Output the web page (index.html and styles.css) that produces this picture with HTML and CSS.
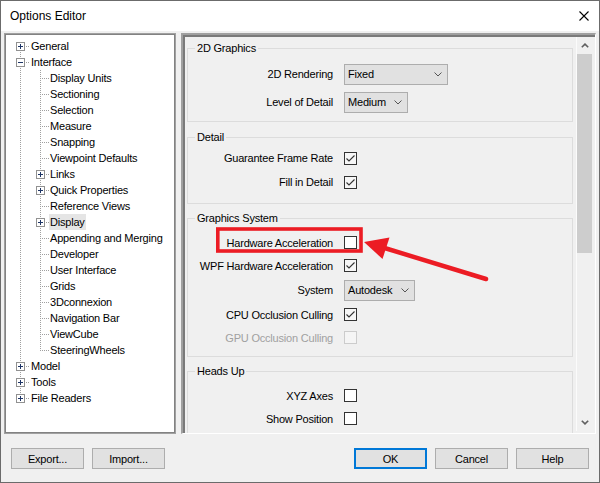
FILE: index.html
```html
<!DOCTYPE html>
<html>
<head>
<meta charset="utf-8">
<title>Options Editor</title>
<link rel="stylesheet" href="styles.css">
</head>
<body>
<div class="window">
  <div class="titlebar">
    <span class="title">Options Editor</span>
    <svg class="close" width="10" height="10" viewBox="0 0 10 10"><path d="M0.5 0.5L9.5 9.5M9.5 0.5L0.5 9.5" stroke="#000" stroke-width="1.1" fill="none"/></svg>
  </div>
  <div class="main">
    <div class="tree">
      <div class="tr"><i class="g bx dn"><svg width="9" height="9" viewBox="0 0 9 9"><rect x=".5" y=".5" width="8" height="8" fill="#fff" stroke="#919191"/><path d="M2 4.5h5M4.5 2v5" stroke="#1e3566"/></svg></i><span class="tx">General</span></div>
      <div class="tr"><i class="g bx up dn"><svg width="9" height="9" viewBox="0 0 9 9"><rect x=".5" y=".5" width="8" height="8" fill="#fff" stroke="#919191"/><path d="M2 4.5h5" stroke="#1e3566"/></svg></i><span class="tx">Interface</span></div>
      <div class="tr"><i class="g v"></i><i class="g t"></i><span class="tx c">Display Units</span></div>
      <div class="tr"><i class="g v"></i><i class="g t"></i><span class="tx c">Sectioning</span></div>
      <div class="tr"><i class="g v"></i><i class="g t"></i><span class="tx c">Selection</span></div>
      <div class="tr"><i class="g v"></i><i class="g t"></i><span class="tx c">Measure</span></div>
      <div class="tr"><i class="g v"></i><i class="g t"></i><span class="tx c">Snapping</span></div>
      <div class="tr"><i class="g v"></i><i class="g t"></i><span class="tx c">Viewpoint Defaults</span></div>
      <div class="tr"><i class="g v"></i><i class="g bx up dn"><svg width="9" height="9" viewBox="0 0 9 9"><rect x=".5" y=".5" width="8" height="8" fill="#fff" stroke="#919191"/><path d="M2 4.5h5M4.5 2v5" stroke="#1e3566"/></svg></i><span class="tx c">Links</span></div>
      <div class="tr"><i class="g v"></i><i class="g bx up dn"><svg width="9" height="9" viewBox="0 0 9 9"><rect x=".5" y=".5" width="8" height="8" fill="#fff" stroke="#919191"/><path d="M2 4.5h5M4.5 2v5" stroke="#1e3566"/></svg></i><span class="tx c">Quick Properties</span></div>
      <div class="tr"><i class="g v"></i><i class="g t"></i><span class="tx c">Reference Views</span></div>
      <div class="tr"><i class="g v"></i><i class="g bx up dn"><svg width="9" height="9" viewBox="0 0 9 9"><rect x=".5" y=".5" width="8" height="8" fill="#fff" stroke="#919191"/><path d="M2 4.5h5M4.5 2v5" stroke="#1e3566"/></svg></i><span class="tx c sel">Display</span></div>
      <div class="tr"><i class="g v"></i><i class="g t"></i><span class="tx c">Appending and Merging</span></div>
      <div class="tr"><i class="g v"></i><i class="g t"></i><span class="tx c">Developer</span></div>
      <div class="tr"><i class="g v"></i><i class="g t"></i><span class="tx c">User Interface</span></div>
      <div class="tr"><i class="g v"></i><i class="g t"></i><span class="tx c">Grids</span></div>
      <div class="tr"><i class="g v"></i><i class="g t"></i><span class="tx c">3Dconnexion</span></div>
      <div class="tr"><i class="g v"></i><i class="g t"></i><span class="tx c">Navigation Bar</span></div>
      <div class="tr"><i class="g v"></i><i class="g t"></i><span class="tx c">ViewCube</span></div>
      <div class="tr"><i class="g v"></i><i class="g l"></i><span class="tx c">SteeringWheels</span></div>
      <div class="tr"><i class="g bx up dn"><svg width="9" height="9" viewBox="0 0 9 9"><rect x=".5" y=".5" width="8" height="8" fill="#fff" stroke="#919191"/><path d="M2 4.5h5M4.5 2v5" stroke="#1e3566"/></svg></i><span class="tx">Model</span></div>
      <div class="tr"><i class="g bx up dn"><svg width="9" height="9" viewBox="0 0 9 9"><rect x=".5" y=".5" width="8" height="8" fill="#fff" stroke="#919191"/><path d="M2 4.5h5M4.5 2v5" stroke="#1e3566"/></svg></i><span class="tx">Tools</span></div>
      <div class="tr"><i class="g bx up"><svg width="9" height="9" viewBox="0 0 9 9"><rect x=".5" y=".5" width="8" height="8" fill="#fff" stroke="#919191"/><path d="M2 4.5h5M4.5 2v5" stroke="#1e3566"/></svg></i><span class="tx">File Readers</span></div>
    </div>
    <div class="panel">
      <div class="content">
        <fieldset class="grp g1">
          <legend>2D Graphics</legend>
          <div class="row rs"><span class="lbl">2D Rendering</span><div class="dd w104"><span>Fixed</span><svg width="8" height="5" viewBox="0 0 8 5"><path d="M0.5 0.5L4 4L7.5 0.5" stroke="#555" fill="none"/></svg></div></div>
          <div class="row rs"><span class="lbl">Level of Detail</span><div class="dd w64"><span>Medium</span><svg width="8" height="5" viewBox="0 0 8 5"><path d="M0.5 0.5L4 4L7.5 0.5" stroke="#555" fill="none"/></svg></div></div>
        </fieldset>
        <fieldset class="grp g2">
          <legend>Detail</legend>
          <div class="row"><span class="lbl">Guarantee Frame Rate</span><span class="cb on"><svg width="11" height="11" viewBox="0 0 11 11"><path d="M1.5 5.5L4 8L9.5 2.5" stroke="#333" stroke-width="1.1" fill="none"/></svg></span></div>
          <div class="row"><span class="lbl">Fill in Detail</span><span class="cb on"><svg width="11" height="11" viewBox="0 0 11 11"><path d="M1.5 5.5L4 8L9.5 2.5" stroke="#333" stroke-width="1.1" fill="none"/></svg></span></div>
        </fieldset>
        <fieldset class="grp g3">
          <legend>Graphics System</legend>
          <div class="row"><span class="lbl">Hardware Acceleration</span><span class="cb"></span></div>
          <div class="row"><span class="lbl">WPF Hardware Acceleration</span><span class="cb on"><svg width="11" height="11" viewBox="0 0 11 11"><path d="M1.5 5.5L4 8L9.5 2.5" stroke="#333" stroke-width="1.1" fill="none"/></svg></span></div>
          <div class="row rm"><span class="lbl">System</span><div class="dd w71"><span>Autodesk</span><svg width="8" height="5" viewBox="0 0 8 5"><path d="M0.5 0.5L4 4L7.5 0.5" stroke="#555" fill="none"/></svg></div></div>
          <div class="row"><span class="lbl">CPU Occlusion Culling</span><span class="cb on"><svg width="11" height="11" viewBox="0 0 11 11"><path d="M1.5 5.5L4 8L9.5 2.5" stroke="#333" stroke-width="1.1" fill="none"/></svg></span></div>
          <div class="row off"><span class="lbl">GPU Occlusion Culling</span><span class="cb dis"></span></div>
        </fieldset>
        <fieldset class="grp g4">
          <legend>Heads Up</legend>
          <div class="row"><span class="lbl">XYZ Axes</span><span class="cb"></span></div>
          <div class="row"><span class="lbl">Show Position</span><span class="cb"></span></div>
        </fieldset>
      </div>
      <div class="scrollbar">
        <div class="sb-btn"><svg width="8" height="5" viewBox="0 0 8 5"><path d="M0.8 4.3L4 1.1L7.2 4.3" stroke="#606060" stroke-width="1.6" fill="none"/></svg></div>
        <div class="thumb"></div>
        <div class="sb-fill"></div>
        <div class="sb-btn"><svg width="8" height="5" viewBox="0 0 8 5"><path d="M0.8 0.7L4 3.9L7.2 0.7" stroke="#606060" stroke-width="1.6" fill="none"/></svg></div>
      </div>
    </div>
  </div>
  <div class="footer">
    <div class="btn">Export...</div>
    <div class="btn">Import...</div>
    <div class="spacer"></div>
    <div class="btn def">OK</div>
    <div class="btn">Cancel</div>
    <div class="btn">Help</div>
  </div>
  <svg class="annot" width="600" height="483" viewBox="0 0 600 483">
    <rect x="217.8" y="229" width="143.2" height="22" fill="none" stroke="#ec1c24" stroke-width="3.6"/>
    <path d="M486 279L378 246" stroke="#ec1c24" stroke-width="4.5" stroke-linecap="round" fill="none"/>
    <polygon points="364,242 389.5,237.5 382.5,259" fill="#ec1c24"/>
  </svg>
</div>
</body>
</html>
```

FILE: styles.css
```css
* { box-sizing: border-box; }
html, body { margin: 0; padding: 0; }
body {
  width: 600px;
  height: 483px;
  overflow: hidden;
  background: #f0f0f0;
  font-family: "Liberation Sans", Arial, sans-serif;
  font-size: 11px;
  letter-spacing: -0.2px;
  color: #000;
}
.window {
  position: relative;
  width: 600px;
  height: 483px;
  border: 1px solid #6b6b6b;
  background: #f0f0f0;
  display: flex;
  flex-direction: column;
}
.titlebar {
  flex: none;
  height: 30px;
  background: #fff;
  display: flex;
  align-items: center;
  justify-content: space-between;
  padding: 0 10px 0 9px;
}
.title { font-size: 12px; letter-spacing: 0; }
.close { display: block; }

.main {
  flex: none;
  height: 403px;
  display: flex;
  gap: 5px;
  padding: 2px 3px 0 3px;
}

/* tree */
.tree {
  --vline: repeating-linear-gradient(to bottom, #a0a0a0 0 1px, transparent 1px 2px);
  --hline: repeating-linear-gradient(to right, #a0a0a0 0 1px, transparent 1px 2px);
  flex: none;
  width: 172px;
  height: 401px;
  background: #fff;
  border: 1px solid #a0a0a0;
  box-shadow: inset 0 0 0 1px #828282;
  padding: 4px 0 0 5px;
  overflow: hidden;
}
.tr {
  height: 16px;
  display: flex;
  align-items: center;
}
.g {
  flex: none;
  width: 20px;
  height: 16px;
  display: block;
  padding: 4px 0 0 6px;
}
.g svg { display: block; }
.v { background: var(--vline) 10px 0 / 1px 16px no-repeat; }
.t {
  background: var(--vline) 10px 0 / 1px 16px no-repeat,
              var(--hline) 12px 8px / 8px 1px no-repeat;
}
.l {
  background: var(--vline) 10px 0 / 1px 9px no-repeat,
              var(--hline) 12px 8px / 8px 1px no-repeat;
}
.bx { background: var(--hline) 16px 8px / 4px 1px no-repeat; }
.bx.dn {
  background: var(--hline) 16px 8px / 4px 1px no-repeat,
              var(--vline) 10px 14px / 1px 2px no-repeat;
}
.bx.up {
  background: var(--hline) 16px 8px / 4px 1px no-repeat,
              var(--vline) 10px 0 / 1px 4px no-repeat;
}
.bx.up.dn {
  background: var(--hline) 16px 8px / 4px 1px no-repeat,
              var(--vline) 10px 0 / 1px 4px no-repeat,
              var(--vline) 10px 14px / 1px 2px no-repeat;
}
.tx {
  line-height: 16px;
  white-space: nowrap;
  padding-left: 1px;
}
.tx.c { padding-left: 0; }
.tx.sel {
  background: #e5e5e5;
  margin-left: -1px;
  padding: 0 1px 0 1px;
}

/* right panel */
.panel {
  flex: 1;
  display: flex;
  border-style: solid;
  border-width: 2px 1px 1px 2px;
  border-color: #a0a0a0 #fff #fff #a0a0a0;
  box-shadow: inset 2px 2px 0 #7a7a7a;
  overflow: hidden;
}
.content {
  flex: 1;
  min-width: 0;
  overflow: hidden;
  padding-top: 6px;
}
.grp {
  border: 1px solid #dcdcdc;
  margin: 0 3px 0 4px;
  padding: 0;
  min-width: 0;
}
.grp legend {
  margin-left: 7px;
  padding: 0 2px;
  line-height: 15px;
  font-size: 11px;
}
.g1 { padding: 4px 0 5px; }
.g2 { padding: 1px 0 9px; margin-top: 8px; }
.g3 { padding: 5px 0 7px; margin-top: 7px; }
.g4 { padding: 5px 0 10px; margin-top: 7px; }

.row {
  display: flex;
  align-items: center;
  height: 23px;
}
.g2 .row { height: 24px; }
.row.rs { height: 28px; }
.row.rm { height: 26px; }
.lbl {
  width: 145px;
  margin-right: 11px;
  text-align: right;
  white-space: nowrap;
}
.row.off .lbl { color: #a0a0a0; }

.cb {
  flex: none;
  width: 13px;
  height: 13px;
  border: 1px solid #333;
  background: #fff;
  display: flex;
  align-items: center;
  justify-content: center;
}
.cb.on { background: #f6f6f6; }
.cb.dis { border-color: #cccccc; background: #f5f5f5; }
.cb svg { display: block; }

.dd {
  height: 21px;
  border: 1px solid #adadad;
  background: #e1e1e1;
  display: flex;
  align-items: center;
  justify-content: space-between;
  padding: 0 5px 0 3px;
}
.dd svg { display: block; }
.w104 { width: 104px; }
.w64 { width: 64px; }
.w71 { width: 71px; }

.scrollbar {
  flex: none;
  width: 18px;
  margin: 2px 1px 2px 0;
  padding-right: 2px;
  border-left: 1px solid #fbfbfb;
  display: flex;
  flex-direction: column;
}
.sb-btn {
  height: 17px;
  flex: none;
  display: flex;
  align-items: center;
  justify-content: center;
}
.thumb {
  flex: none;
  height: 199px;
  background: #cdcdcd;
}
.sb-fill { flex: 1; }

/* footer */
.footer {
  flex: 1;
  display: flex;
  align-items: flex-start;
  gap: 8px;
  padding: 14px 10px 0 10px;
}
.spacer { flex: 1; }
.btn {
  width: 73px;
  height: 21px;
  border: 1px solid #adadad;
  background: #e1e1e1;
  display: flex;
  align-items: center;
  justify-content: center;
}
.btn.def { border: 2px solid #0078d7; }

.annot {
  position: absolute;
  left: -1px;
  top: -1px;
  pointer-events: none;
}
```
